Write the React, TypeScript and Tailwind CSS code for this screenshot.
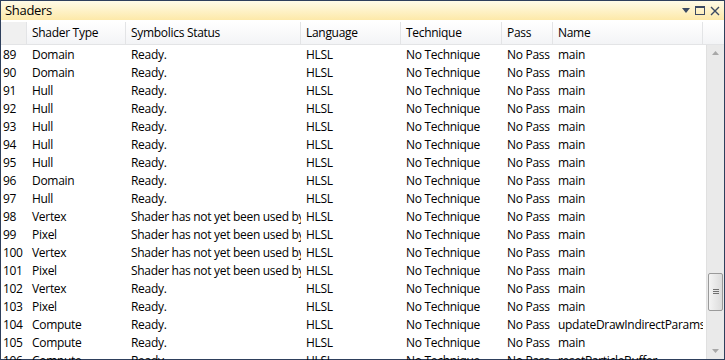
const READY = "Ready.";
const NOT_USED = "Shader has not yet been used by";

const rows = [
  { id: 89, type: "Domain", status: READY, name: "main" },
  { id: 90, type: "Domain", status: READY, name: "main" },
  { id: 91, type: "Hull", status: READY, name: "main" },
  { id: 92, type: "Hull", status: READY, name: "main" },
  { id: 93, type: "Hull", status: READY, name: "main" },
  { id: 94, type: "Hull", status: READY, name: "main" },
  { id: 95, type: "Hull", status: READY, name: "main" },
  { id: 96, type: "Domain", status: READY, name: "main" },
  { id: 97, type: "Hull", status: READY, name: "main" },
  { id: 98, type: "Vertex", status: NOT_USED, name: "main" },
  { id: 99, type: "Pixel", status: NOT_USED, name: "main" },
  { id: 100, type: "Vertex", status: NOT_USED, name: "main" },
  { id: 101, type: "Pixel", status: NOT_USED, name: "main" },
  { id: 102, type: "Vertex", status: READY, name: "main" },
  { id: 103, type: "Pixel", status: READY, name: "main" },
  { id: 104, type: "Compute", status: READY, name: "updateDrawIndirectParams" },
  { id: 105, type: "Compute", status: READY, name: "main" },
  { id: 106, type: "Compute", status: READY, name: "resetParticleBuffer" }
];

const columns = [
  { label: "", width: "w-[26px]" },
  { label: "Shader Type", width: "w-[99px]" },
  { label: "Symbolics Status", width: "w-[175px]" },
  { label: "Language", width: "w-[100px]" },
  { label: "Technique", width: "w-[101px]" },
  { label: "Pass", width: "w-[51px]" },
  { label: "Name", width: "w-[150px]" }
];

function Cell({ width, children }: { width: string; children: React.ReactNode }) {
  return (
    <div className={`${width} shrink-0 overflow-hidden whitespace-nowrap pl-[5px]`}>{children}</div>
  );
}

export default function App() {
  return (
    <div
      className="w-[725px] h-[360px] overflow-hidden bg-[#2e3f5c] p-[1px] text-[12px] tracking-[-0.3px] text-black"
      style={{ fontFamily: '"Segoe UI", "Open Sans", "Noto Sans", sans-serif' }}
    >
      <div className="flex h-full flex-col bg-white">
        {/* title bar */}
        <div className="flex h-[19px] shrink-0 items-center justify-between bg-gradient-to-b from-[#fffbe8] to-[#fde9a8] pl-[4px] pr-[4px]">
          <span className="text-[13px] leading-none">Shaders</span>
          <div className="flex items-center gap-[5px] text-[#3c4a63]">
            <svg width="8" height="5" viewBox="0 0 8 5">
              <path d="M0 0H8L4 5Z" fill="#3c4a63" />
            </svg>
            <svg width="10" height="9" viewBox="0 0 10 9">
              <rect x="0.5" y="0.5" width="9" height="8" fill="none" stroke="#3c4a63" />
              <rect x="0" y="0" width="10" height="2" fill="#3c4a63" />
            </svg>
            <svg width="10" height="10" viewBox="0 0 10 10">
              <path d="M1 1L9 9M9 1L1 9" stroke="#3c4a63" strokeWidth="1.4" />
            </svg>
          </div>
        </div>

        <div className="flex min-h-0 flex-1 pt-[2px]">
          <div className="flex min-w-0 flex-1 flex-col">
            {/* header */}
            <div className="flex h-[23px] shrink-0 items-center border-b border-[#e3e4e6] bg-gradient-to-b from-white to-[#f3f4f6]">
              {columns.map((c, i) => (
                <div
                  key={i}
                  className={`${c.width} h-full shrink-0 border-r border-[#e3e4e6] pl-[5px] flex items-center whitespace-nowrap ${i === 0 ? "bg-[#f0f0f0]" : ""}`}
                >
                  {c.label}
                </div>
              ))}
              <div className="flex-1" />
            </div>

            {/* rows */}
            <div className="flex flex-col pt-[1px]">
              {rows.map((r) => (
                <div key={r.id} className="flex h-[18px] shrink-0 items-center leading-[18px]">
                  <div className="w-[26px] shrink-0 pl-[2px] whitespace-nowrap">{r.id}</div>
                  <Cell width="w-[99px]">{r.type}</Cell>
                  <Cell width="w-[175px]">{r.status}</Cell>
                  <Cell width="w-[100px]">HLSL</Cell>
                  <Cell width="w-[101px]">No Technique</Cell>
                  <Cell width="w-[51px]">No Pass</Cell>
                  <Cell width="w-[150px]">{r.name}</Cell>
                </div>
              ))}
            </div>
          </div>

          {/* scrollbar */}
          <div className="flex w-[18px] shrink-0 flex-col bg-white">
            <div className="h-[23px] shrink-0 border-b border-[#e3e4e6] bg-gradient-to-b from-white to-[#f3f4f6]" />
            <div className="flex flex-1 flex-col items-center bg-[#eaeaea] border-l border-[#e0e0e0]">
              <div className="flex h-[16px] w-full items-center justify-center">
                <svg width="7" height="4" viewBox="0 0 7 4">
                  <path d="M0 4H7L3.5 0Z" fill="#a8a8a8" />
                </svg>
              </div>
              <div className="h-[212px] shrink-0" />
              <div className="flex h-[38px] w-[15px] shrink-0 items-center justify-center rounded-[2px] border border-[#9a9a9a] bg-gradient-to-r from-[#f4f4f4] to-[#dcdcdc]">
                <svg width="6" height="6" viewBox="0 0 6 6">
                  <path d="M0 0.5H6M0 2.5H6M0 4.5H6" stroke="#707070" strokeWidth="1" />
                </svg>
              </div>
              <div className="flex-1" />
              <div className="flex h-[16px] w-full items-center justify-center">
                <svg width="7" height="4" viewBox="0 0 7 4">
                  <path d="M0 0H7L3.5 4Z" fill="#a8a8a8" />
                </svg>
              </div>
            </div>
          </div>
        </div>
      </div>
    </div>
  );
}
